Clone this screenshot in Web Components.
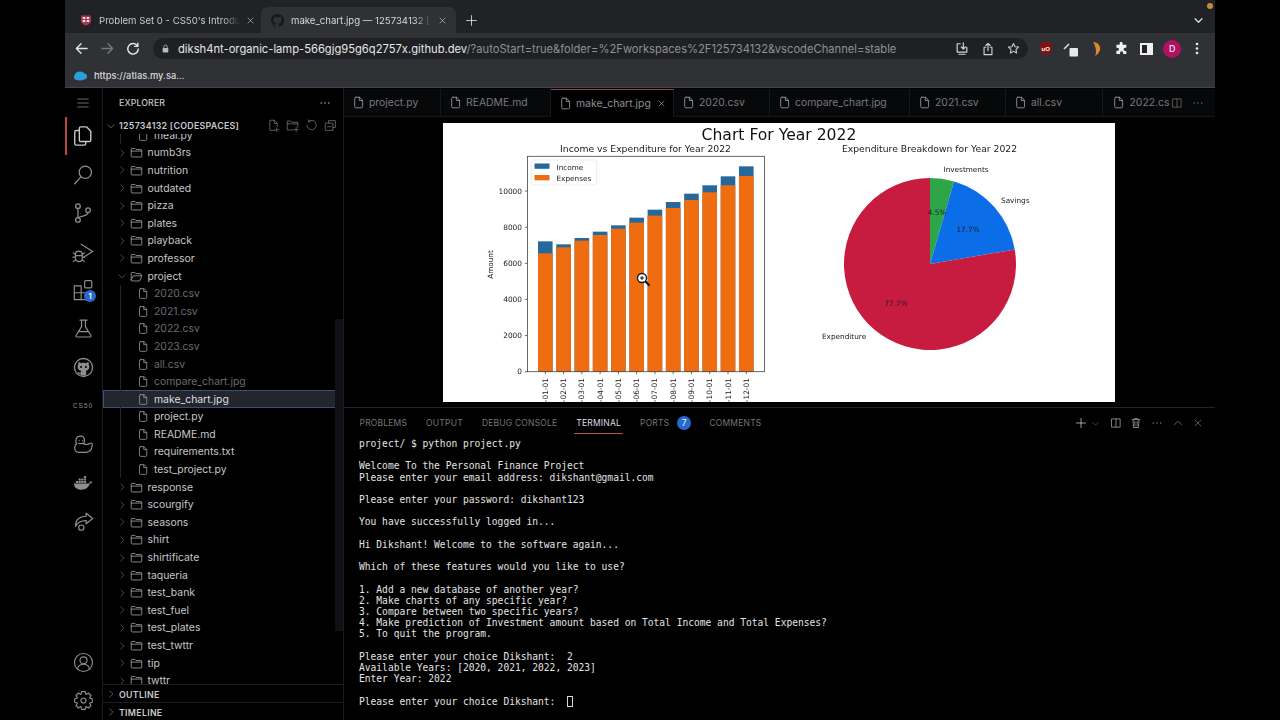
<!DOCTYPE html>
<html><head><meta charset="utf-8"><style>
html,body{margin:0;padding:0;background:#000;height:720px;overflow:hidden;font-family:Inter,"Liberation Sans",sans-serif}
</style></head><body>
<browser-window>
  <tab-strip></tab-strip>
  <nav-bar></nav-bar>
  <bookmark-bar></bookmark-bar>
  <code-workbench></code-workbench>
</browser-window>
<script>
const S=(vb,inner,w,h,extra='')=>`<svg xmlns="http://www.w3.org/2000/svg" width="${w}" height="${h||w}" viewBox="0 0 ${vb} ${vb}" fill="none" stroke="currentColor" stroke-linecap="round" stroke-linejoin="round" ${extra}>${inner}</svg>`;
const GH="M8 0C3.58 0 0 3.58 0 8c0 3.54 2.29 6.53 5.47 7.59.4.07.55-.17.55-.38 0-.19-.01-.82-.01-1.49-2.01.37-2.53-.49-2.69-.94-.09-.23-.48-.94-.82-1.13-.28-.15-.68-.52-.01-.53.63-.01 1.08.58 1.23.82.72 1.21 1.87.87 2.33.66.07-.52.28-.87.51-1.07-1.78-.2-3.64-.89-3.64-3.95 0-.87.31-1.59.82-2.15-.08-.2-.36-1.02.08-2.12 0 0 .67-.21 2.2.82.64-.18 1.32-.27 2-.27s1.36.09 2 .27c1.53-1.04 2.2-.82 2.2-.82.44 1.1.16 1.92.08 2.12.51.56.82 1.27.82 2.15 0 3.07-1.87 3.75-3.65 3.95.29.25.54.73.54 1.48 0 1.07-.01 1.93-.01 2.2 0 .21.15.46.55.38A8.013 8.013 0 0016 8c0-4.42-3.58-8-8-8z";
function gearPath(){let d='';const n=8,c=12,R=10.3,r=7.6;for(let i=0;i<n;i++){const a=i*2*Math.PI/n,s=.24,t=.14;const p=[[r,a-s-t],[R,a-s+.04],[R,a+s-.04],[r,a+s+t]];p.forEach((q,j)=>{d+=(i==0&&j==0?'M':'L')+(c+q[0]*Math.sin(q[1])).toFixed(2)+' '+(c-q[0]*Math.cos(q[1])).toFixed(2)})}return d+'Z'}
const I={
 file:s=>S(16,'<path d="M4.8 1.5h4.4L13 5.3v7.7a1.5 1.5 0 0 1-1.5 1.5H4.8A1.5 1.5 0 0 1 3.3 13V3a1.5 1.5 0 0 1 1.5-1.5zM9 1.6v3.9h3.9"/>',s),
 folder:s=>S(16,'<path d="M1.5 4A1 1 0 0 1 2.5 3h3.6l1.3 1.4h6.1a1 1 0 0 1 1 1v7.1a1 1 0 0 1-1 1h-11a1 1 0 0 1-1-1zM1.5 6.3h13"/>',s),
 open:s=>S(16,'<path d="M1.5 12.5V4A1 1 0 0 1 2.5 3h3.4l1.4 1.4h5.2a1 1 0 0 1 1 1v1.7M1.5 12.8c.2.4.5.7 1 .7h9.3l3-6.4H4.6z"/>',s),
 right:s=>S(16,'<path d="M6 3l5 5-5 5"/>',s),
 down:s=>S(16,'<path d="M3 6l5 5 5-5"/>',s),
 x:s=>S(16,'<path d="M3.5 3.5l9 9M12.5 3.5l-9 9"/>',s),
 plus:s=>S(16,'<path d="M8 2v12M2 8h12"/>',s),
 dots:s=>S(16,'<g fill="currentColor" stroke="none"><circle cx="3" cy="8" r="1"/><circle cx="8" cy="8" r="1"/><circle cx="13" cy="8" r="1"/></g>',s),
 split:s=>S(16,'<path d="M2.5 2.5h11v11h-11zM8 2.5v11"/>',s),
 trash:s=>S(16,'<path d="M6 3V2h4v1M3 3.5h10M4 3.5l.6 10.5h6.8l.6-10.5M6.5 6v6M9.500 6v6"/>',s),
 up:s=>S(16,'<path d="M3 10.500l5-5 5 5"/>',s),
 menu:s=>S(16,'<path d="M2 3.500h12M2 8h12M2 12.500h12"/>',s),
 newfile:s=>S(16,'<path d="M9.500 14H3.500V1.500h5.500L12.500 5v4M9 1.500V5.500h3.500M12 11v4.500M9.800 13.200h4.400"/>',s),
 newfolder:s=>S(16,'<path d="M9 13.500H1.500v-11h4.300l1.300 1.500h7.400v6M1.500 6h13M12.500 10.500v5M10 13h5"/>',s),
 refresh:s=>S(16,'<path d="M4 3.200a5.800 5.800 0 1 1-1.800 4.300M4.200 1v2.500H6.700"/>',s),
 collapse:s=>S(16,'<path d="M5.500 5V2h8.500v8.500H11M2 5h9v9H2zM4.500 9.500h4"/>',s),
 files:s=>S(24,'<path d="M9.500 2h6.300L20.500 6.700V16.500a1.500 1.500 0 0 1-1.500 1.500H9.500A1.500 1.500 0 0 1 8 16.500V3.500A1.500 1.500 0 0 1 9.500 2zM8 6H4.500A1.500 1.500 0 0 0 3 7.500V20.500A1.500 1.500 0 0 0 4.500 22H13.500A1.500 1.500 0 0 0 15 20.500V18"/>',s,s,'stroke-width="1.500"'),
 search:s=>S(24,'<circle cx="14.500" cy="9" r="6.700"/><path d="M9.800 14L2.800 21.500"/>',s,s,'stroke-width="1.400"'),
 scm:s=>S(24,'<circle cx="6.500" cy="4.500" r="2.500"/><circle cx="6.500" cy="19.500" r="2.500"/><circle cx="17.500" cy="9" r="2.500"/><path d="M6.500 7v10M17.500 11.500c0 4.500-8 3-11 5.800"/>',s,s,'stroke-width="1.400"'),
 run:s=>S(24,'<path d="M10 3.500L22.500 11.500 12 18M7.500 11a3.800 3.800 0 0 1 3.700 3.800v4a3.700 3.700 0 0 1-7.400 0v-4A3.800 3.800 0 0 1 7.500 11zM1.500 13l2.300 2M13.500 13l-2.300 2M1 17.500h2.800M14 17.500h-2.800M1.500 22.500l2.500-2M13.500 22.500l-2.500-2M3.800 16h7.400"/>',s,s,'stroke-width="1.300"'),
 ext:s=>S(24,'<path d="M2.500 7.500h7.500v7.500h7.500v7.500H2.500zM2.500 15h7.500v7.500"/><rect x="13.800" y="1.800" width="7.800" height="7.800" rx="1.200"/>',s,s,'stroke-width="1.300"'),
 flask:s=>S(24,'<path d="M8 2.500h8M9.800 2.500v7.300L3.500 20a1.100 1.100 0 0 0 1 1.700h15a1.100 1.100 0 0 0 1-1.700L14.200 9.800V2.500M6.800 15.500h10.400"/>',s,s,'stroke-width="1.400"'),
 github:s=>`<svg width="${s}" height="${s}" viewBox="0 0 24 24"><circle cx="12" cy="12" r="10.300" fill="none" stroke="currentColor" stroke-width="1.500"/><path fill="currentColor" d="M6.200 5.600c1.400.1 2.500.7 3.300 1.400 1.600-.4 3.400-.4 5 0 .8-.7 1.900-1.300 3.300-1.400.4 1.100.4 2.200.1 3.100.7.900 1 2 .8 3.200-.3 2.300-1.900 3.500-4.200 3.800.5.500.7 1.200.7 2v3.300h-6.400v-1.600c-2 .4-3.200-.5-3.800-2l1.400-.4c.5 1 1.300 1.300 2.400 1v-.3c0-.8.200-1.500.7-2-2.300-.3-3.900-1.500-4.200-3.800-.2-1.200.1-2.300.8-3.200-.3-.9-.3-2 .1-3.100z"/><g fill="#000"><ellipse cx="9.200" cy="11.300" rx="1" ry="1.400"/><ellipse cx="14.800" cy="11.300" rx="1" ry="1.400"/></g></svg>`,
 duck:s=>S(24,'<path d="M5 3.500c2.700-2.200 7-1.200 8 2.200.7 2.300-.2 4.200-1 5.300 2.500 1.400 4.200 1.300 6 .3 1.500-.8 3.300-1.500 3.800-.6.700 4-.5 9.500-7 10.300H7c-4 0-5.500-3-5-6 .3-1.700 1.200-3 2.300-3.800C2.800 9.500 2.800 5.300 5 3.500zM7 7.500h.01M11 7.500h.01M6.500 10.500c1.500.8 3 .8 4.500 0"/>',s,s,'stroke-width="1.400"'),
 docker:s=>`<svg width="${s}" height="${s}" viewBox="0 0 24 24" fill="currentColor"><path d="M1 12.500h18c.8-.2 1.300-1 1.200-2 .9-.6 2.200-.5 3 .2-.6 1.300-1.700 1.900-3 1.900C19 17 15.500 20 10.500 20 4.500 20 1.300 17 1 12.500z"/><path d="M3.500 9.500h2.600v2.400H3.500zM6.700 9.500h2.600v2.400H6.700zM9.900 9.500h2.600v2.400H9.900zM13.100 9.500h2.600v2.400h-2.600zM6.700 6.500h2.600v2.400H6.700zM9.900 6.500h2.600v2.400H9.900zM13.100 6.500h2.600v2.400h-2.600zM13.100 3.500h2.600v2.400h-2.600z"/></svg>`,
 share:s=>S(24,'<path d="M15 2.500L22.500 8.500 15 14.500V11C9 11 5 13 3 17.500 2.500 10.500 7 6 15 6zM9.500 22a3 3 0 1 0 0-6 3 3 0 0 0 0 6z"/>',s,s,'stroke-width="1.400"'),
 account:s=>S(24,'<circle cx="12" cy="12" r="10.300"/><circle cx="12" cy="9.500" r="4"/><path d="M5 19.500c1-3.500 3.500-5.500 7-5.500s6 2 7 5.500"/>',s,s,'stroke-width="1.300"'),
 gear:s=>S(24,`<path d="${gearPath()}"/><circle cx="12" cy="12" r="2.900"/>`,s,s,'stroke-width="1.300"'),
 back:s=>S(16,'<path d="M14 8H2.500M7.500 3L2.500 8l5 5"/>',s,s,'stroke-width="1.500"'),
 fwd:s=>S(16,'<path d="M2 8h11.500M8.500 3l5 5-5 5"/>',s,s,'stroke-width="1.500"'),
 reload:s=>S(16,'<path d="M13 4.500A6 6 0 1 0 14 8M13.500 1.500v3.500H10"/>',s,s,'stroke-width="1.700"'),
 lock:s=>`<svg width="${s}" height="${s}" viewBox="0 0 16 16"><rect x="3" y="7" width="10" height="8" rx="1.200" fill="currentColor"/><path d="M5 7V5a3 3 0 0 1 6 0v2" fill="none" stroke="currentColor" stroke-width="1.500"/></svg>`,
 install:s=>S(16,'<path d="M6 2H2.500v9.500h11V6M9.500 1v6.500M7 5.500l2.500 2.500L12 5.500M4.500 14h7"/>',s,s,'stroke-width="1.400"'),
 up2:s=>S(16,'<path d="M5.500 6H3.500v8.500h9V6h-2M8 10V1.500M5.500 4L8 1.500 10.500 4"/>',s,s,'stroke-width="1.300"'),
 star:s=>S(16,'<path d="M8 1.800l1.900 4 4.300.5-3.200 3 .9 4.300L8 11.500l-3.900 2.100.9-4.300-3.200-3 4.300-.5z"/>',s,s,'stroke-width="1.300"'),
 chev:s=>S(16,'<path d="M3 5.500l5 5 5-5"/>',s,s,'stroke-width="1.800"'),
};

class Base extends HTMLElement{
  connectedCallback(){ if(!this.shadowRoot){this.attachShadow({mode:'open'}).innerHTML=this.render();} }
}
const def=(n,c)=>customElements.define(n,c);

def('browser-window',class extends Base{render(){return `<style>:host{display:flex;flex-direction:column;width:1150px;height:720px;margin-left:65px;background:#000;position:relative;overflow:hidden}
 .rec{position:absolute;left:1142px;top:3px;width:6px;height:6px;border-radius:50%;background:#c98a45}</style><slot></slot><div class="rec"></div>`}});

def('chrome-tab',class extends Base{render(){const a=this.hasAttribute('active');return `<style>
 :host{display:flex;align-items:center;height:26px;width:${this.getAttribute('w')}px;box-sizing:border-box;padding-left:${a?9:14}px;border-radius:7px 7px 0 0;background:${a?'#2f3134':'transparent'};color:${a?'#d6d7d9':'#c9cacc'};font:400 9.6px Inter,"Liberation Sans",sans-serif;position:relative}
 .ic{width:14px;height:14px;flex:none;margin-right:${a?7:6}px;display:flex;align-items:center;justify-content:center}
 .t{flex:1;min-width:0;overflow:hidden;white-space:nowrap;-webkit-mask-image:linear-gradient(90deg,#000 88%,transparent);mask-image:linear-gradient(90deg,#000 88%,transparent)}
 .x{width:14px;height:14px;flex:none;margin:0 ${a?7:2}px 0 3px;color:#dcdcdc;display:flex;align-items:center;justify-content:center}</style>
 <span class="ic"><slot name="icon"></slot></span><span class="t"><slot></slot></span><span class="x">${I.x(9)}</span>`}});

def('tab-strip',class extends Base{render(){return `<style>
 :host{display:flex;align-items:flex-end;height:33px;background:#202225;box-sizing:border-box;padding-left:0;gap:2px;color:#ddd}
 .plus{width:30px;height:26px;display:flex;align-items:center;justify-content:center;color:#e8e8e8;margin-left:-2px}
 .sp{flex:1}.ch{width:16px;height:26px;margin-right:9px;display:flex;align-items:center;justify-content:center;color:#ddd}
 svg{display:block}</style>
 <chrome-tab w="194"><svg slot="icon" width="12" height="12" viewBox="0 0 12 12"><path d="M1 1.500h10v6c0 1.500-3 3.500-5 4-2-.5-5-2.500-5-4z" fill="#a5384f"/><path d="M2.800 3h2.500v2H2.800zM6.700 3h2.500v2H6.700zM2.800 6h2.500v2H2.800zM6.700 6h2.500v2H6.700z" fill="#f0dfe2"/></svg>Problem Set 0 - CS50's Introdu</chrome-tab>
 <chrome-tab active w="195"><svg slot="icon" width="13" height="13" viewBox="0 0 16 16"><path fill="#17181a" d="${GH}"/></svg>make_chart.jpg — 125734132 [</chrome-tab>
 <span class="plus">${I.plus(13)}</span><span class="sp"></span><span class="ch">${I.chev(11)}</span>`}});

def('nav-bar',class extends Base{render(){return `<style>
 :host{display:flex;align-items:center;height:33px;background:#2f3134;box-sizing:border-box;color:#e2e3e5;padding:0 0 1.500px 3px}
 .b{display:flex;align-items:center;justify-content:center;flex:none}
 .nav{width:26px}.dim{color:#75777b}
 .omni{display:flex;align-items:center;width:875px;height:21px;border-radius:11px;background:#1e2023;box-sizing:border-box;padding-left:7px;flex:none}
 .lock{color:#b8b9bb;margin-right:8px;width:10px}
 .u{font:400 11.2px Inter,"Liberation Sans",sans-serif;white-space:nowrap;color:#e6e7e8;flex:1;overflow:hidden}
 .u i{font-style:normal;color:#8e9094}
 .o{width:25.500px;color:#d0d1d3}
 .ex{width:25.300px}
 .ub{width:12px;height:13px;background:#7e1414;border-radius:3px 3px 6px 6px;color:#fff;font:700 6px "Liberation Sans",sans-serif;display:flex;align-items:center;justify-content:center}
 .av{width:18px;height:18px;border-radius:50%;background:#b0125f;color:#eee;font:500 9px Inter,sans-serif;display:flex;align-items:center;justify-content:center}
 svg{display:block}
 </style>
 <span class="b nav">${I.back(15)}</span><span class="b nav dim">${I.fwd(15)}</span><span class="b nav">${I.reload(14)}</span>
 <div class="omni" style="margin-left:7px"><span class="b lock">${I.lock(9)}</span><span class="u">diksh4nt-organic-lamp-566gjg95g6q2757x.github.dev<i>/?autoStart=true&amp;folder=%2Fworkspaces%2F125734132&amp;vscodeChannel=stable</i></span>
 <span class="b o">${I.install(14)}</span><span class="b o">${I.up2(14)}</span><span class="b o" style="margin-right:2px">${I.star(13)}</span></div>
 <span class="b ex" style="margin-left:5px"><span class="ub">uO</span></span>
 <span class="b ex"><svg width="20" height="20" viewBox="0 0 20 20"><path d="M3 10l5-5" stroke="#ddd" stroke-width="1.600"/><rect x="8.500" y="9" width="8.500" height="8.500" rx="1" fill="#e8e8e8"/></svg></span>
 <span class="b ex"><svg width="12" height="16" viewBox="0 0 12 16"><path d="M3 1c5 0 8 4 7 8-1 3-3 5-5 6 2-4 1-9-2-14z" fill="#d98a2b"/><path d="M3 1C1 5 2 11 5 15 1 13-1 5 3 1z" fill="#27305c"/></svg></span>
 <span class="b ex"><svg width="13" height="13" viewBox="0 0 14 14"><path d="M5 1.500a1.600 1.600 0 0 1 3.200 0V3h4v3.200h-1.300a1.700 1.700 0 0 0 0 3.400h1.300V13H8.800v-1.300a1.700 1.700 0 0 0-3.400 0V13H1.500V9.500h1.100a1.700 1.700 0 0 0 0-3.400H1.500V3H5z" fill="#f0f0f0"/></svg></span>
 <span class="b ex"><svg width="13" height="12" viewBox="0 0 13 12"><rect x=".7" y=".7" width="11.600" height="10.600" fill="#f0f0f0" stroke="#f0f0f0" stroke-width="1.400"/><rect x="2" y="2" width="5" height="8" fill="#1f2123"/></svg></span>
 <span class="b ex"><span class="av">D</span></span>
 <span class="b ex"><svg width="4" height="13" viewBox="0 0 4 13"><g fill="#e8e8e8"><circle cx="2" cy="2" r="1.300"/><circle cx="2" cy="6.500" r="1.300"/><circle cx="2" cy="11" r="1.300"/></g></svg></span>`}});

def('bookmark-bar',class extends Base{render(){return `<style>
 :host{display:flex;align-items:center;height:22px;background:#2f3134;box-sizing:border-box;padding:0 0 2px 9px;color:#d6d7d9;font:500 9.300px Inter,"Liberation Sans",sans-serif;border-bottom:1px solid #43454a}
 svg{margin-right:7px;display:block}</style>
 <svg width="13" height="10" viewBox="0 0 13 10"><g fill="#2a9fd8"><ellipse cx="6" cy="5" rx="5.500" ry="4.500"/><ellipse cx="9.500" cy="5.500" rx="3.500" ry="3"/><ellipse cx="3" cy="6" rx="3" ry="3"/></g></svg>https://atlas.my.sa...`}});

def('activity-item',class extends Base{render(){return `<style>:host{display:flex;align-items:center;justify-content:center;height:38.500px;width:36px;color:${this.getAttribute('c')||'#8d8e90'};position:relative}
 ::slotted(svg){display:block}
 .bar{position:absolute;left:0;top:0;width:1.500px;height:38px;background:#b84a3f}
 .badge{position:absolute;left:19px;top:19px;width:12px;height:12px;border-radius:50%;background:#2468d0;color:#fff;font:600 7.500px Inter,sans-serif;display:flex;align-items:center;justify-content:center}
 </style>${this.hasAttribute('active')?'<span class="bar"></span>':''}<slot></slot>${this.getAttribute('badge')?`<span class="badge">${this.getAttribute('badge')}</span>`:''}`}});

def('activity-bar',class extends Base{render(){const it=(n,s,a='')=>`<activity-item ${a}>${I[n](s)}</activity-item>`;return `<style>
 :host{display:flex;flex-direction:column;width:37px;border-right:1px solid #1c1d20;box-sizing:content-box;background:#000;flex:none}
 .top{height:29px;display:flex;align-items:center;justify-content:center;width:36px;color:#77787b}
 .sp{flex:1}.cs{font:500 6.500px "Liberation Sans",sans-serif;letter-spacing:1px;color:#8d8e90}
 </style>
 <div class="top">${I.menu(14)}</div>
 ${it('files',22,'active c="#c8c9cb"')}${it('search',22)}${it('scm',22)}${it('run',22)}${it('ext',22,'badge="1"')}${it('flask',21)}${it('github',21)}
 <activity-item><span class="cs">CS50</span></activity-item>
 ${it('duck',21)}${it('docker',20)}${it('share',21)}
 <div class="sp"></div>${it('account',21)}${it('gear',21)}`}});

def('tree-row',class extends Base{render(){
 const k=this.getAttribute('k')||'folder';const isF=k==='file';const sel=this.hasAttribute('sel');
 return `<style>:host{display:flex;align-items:center;height:17.600px;box-sizing:border-box;font:400 10.400px Inter,"Liberation Sans",sans-serif;white-space:nowrap;color:${this.hasAttribute('dim')?'#6b6c6f':'#c6c7c9'};position:relative;${sel?'background:#24262d;outline:1px solid #3d4f72;outline-offset:-1px;color:#dedfe0;':''}}
 .g{width:11px;display:flex;justify-content:center;color:#6f7073;flex:none;margin-left:13px}
 .i{display:flex;justify-content:center;color:#a2a3a6;width:13px;flex:none;margin-right:5px;margin-left:2.500px}
 .f{display:flex;justify-content:center;color:#a2a3a6;width:12px;flex:none;margin-left:34px;margin-right:5px}
 .rule{position:absolute;left:16.500px;top:0;bottom:0;width:1px;background:#232427}
 svg{display:block}</style>
 ${isF?`<span class="rule"></span><span class="f">${I.file(13)}</span>`:`<span class="g">${k==='open'?I.down(10):I.right(10)}</span><span class="i">${k==='open'?I.open(13):I.folder(13)}</span>`}<slot></slot>`}});

def('explorer-view',class extends Base{render(){
 const folders1=['numb3rs','nutrition','outdated','pizza','plates','playback','professor'];
 const dim=['2020.csv','2021.csv','2022.csv','2023.csv','all.csv','compare_chart.jpg'];
 const after=['project.py','README.md','requirements.txt','test_project.py'];
 const folders2=['response','scourgify','seasons','shirt','shirtificate','taqueria','test_bank','test_fuel','test_plates','test_twttr','tip','twttr'];
 const ic=n=>`<span class="hi">${I[n](13)}</span>`;
 return `<style>
 :host{display:flex;flex-direction:column;width:239.500px;height:100%;flex:none;background:#000;border-right:1px solid #1c1d20;position:relative;box-sizing:content-box}
 .h{height:29px;display:flex;align-items:center;justify-content:space-between;padding:0 12px 0 16px;font:500 8.800px Inter,"Liberation Sans",sans-serif;color:#c4c5c7;letter-spacing:.1px;flex:none}
 .sec{height:17px;display:flex;align-items:center;font:600 8.800px Inter,"Liberation Sans",sans-serif;color:#c9cacc;flex:none;letter-spacing:.3px;padding:0 3px 0 1px;box-sizing:border-box}
 .sec .c{width:14px;display:flex;justify-content:center;color:#8a8b8d;margin-right:1px}
 .sec .t{flex:1}
 .hi{width:19px;display:flex;justify-content:center;color:#6d6e72}
 .tree{flex:1;overflow:hidden;min-height:0;position:relative}
 .in{margin-top:-7.500px}
 .bar{border-top:1px solid #1c1d20;height:18px;padding-top:1px}
 .scroll{position:absolute;right:0;top:185px;width:8px;height:312px;background:#101114}
 svg{display:block}
 </style>
 <div class="h"><span>EXPLORER</span><span style="color:#b0b1b3">${I.dots(12)}</span></div>
 <div class="sec"><span class="c">${I.down(10)}</span><span class="t">125734132 [CODESPACES]</span>${ic('newfile')}${ic('newfolder')}${ic('refresh')}${ic('collapse')}</div>
 <div class="tree"><div class="in">
 <tree-row k="file">meal.py</tree-row>
 ${folders1.map(f=>`<tree-row>${f}</tree-row>`).join('')}
 <tree-row k="open">project</tree-row>
 ${dim.map(f=>`<tree-row k="file" dim>${f}</tree-row>`).join('')}
 <tree-row k="file" sel>make_chart.jpg</tree-row>
 ${after.map(f=>`<tree-row k="file">${f}</tree-row>`).join('')}
 ${folders2.map(f=>`<tree-row>${f}</tree-row>`).join('')}
 </div><div class="scroll"></div></div>
 <div class="sec bar"><span class="c">${I.right(10)}</span><span class="t">OUTLINE</span></div>
 <div class="sec bar"><span class="c">${I.right(10)}</span><span class="t">TIMELINE</span></div>`}});

def('editor-tab',class extends Base{render(){const a=this.hasAttribute('active');return `<style>
 :host{display:flex;align-items:center;flex:none;height:28px;box-sizing:border-box;width:${this.getAttribute('w')}px;padding-left:8px;border-right:1px solid #17181b;background:${a?'#000':'#07080a'};color:${a?'#8f9093':'#77787b'};font:400 10.400px Inter,"Liberation Sans",sans-serif;white-space:nowrap;overflow:hidden;${a?'border-top:1.500px solid #8c4a4a;':'border-bottom:1px solid #17181b;'}}
 .i{margin-right:4.500px;color:#a0a1a4;flex:none}.x{margin-left:auto;margin-right:7px;color:#b8b9bb}
 svg{display:block}</style><span class="i">${I.file(13)}</span><slot></slot>${a?`<span class="x">${I.x(9)}</span>`:''}`}});

def('editor-tabs',class extends Base{render(){return `<style>:host{display:flex;height:29px;flex:none;background:#07080a;border-top:1px solid #000;box-sizing:border-box;overflow:hidden}
 .rest{flex:1;min-width:0;display:flex;align-items:center;border-bottom:1px solid #17181b;color:#77787b;font:400 10.400px Inter,"Liberation Sans",sans-serif;padding-left:9px;white-space:nowrap;overflow:hidden;box-sizing:border-box}
 .i{margin-right:5px;color:#a0a1a4;flex:none}svg{display:block}
 .a{display:flex;align-items:center;gap:9px;margin-left:auto;padding:0 9px 0 0;color:#6d6e72;background:#07080a;flex:none}</style>
 <editor-tab w="97">project.py</editor-tab><editor-tab w="110">README.md</editor-tab><editor-tab active w="123">make_chart.jpg</editor-tab><editor-tab w="96">2020.csv</editor-tab><editor-tab w="140">compare_chart.jpg</editor-tab><editor-tab w="96">2021.csv</editor-tab><editor-tab w="97">all.csv</editor-tab>
 <div class="rest"><span class="i">${I.file(13)}</span><span style="flex:none">2022.cs</span><span class="a" style="margin-left:2px">${I.split(12)}${I.dots(12)}</span></div>`}});

def('chart-image',class extends Base{render(){
 const inc=[364,373,354,335,316,293,269,246,221,196,169,139],exp=[400,382,362,345,326,308,287,264,240,217,196,168];
 const zy=v=>120+v/3;const base=371.7;
 let bars='',ticksX='';
 inc.forEach((v,i)=>{const x=538+i*18.27;
  bars+=`<rect x="${x}" y="${zy(v)}" width="14.600" height="${base-zy(v)}" fill="#26689a"/><rect x="${x}" y="${zy(exp[i])}" width="14.600" height="${base-zy(exp[i])}" fill="#ef6c10"/>`;
  ticksX+=`<path d="M${x+7.300} 371.700v2.500" stroke="#333" stroke-width=".7"/><text x="0" y="0" transform="translate(${x+9.800} 378) rotate(-90)" text-anchor="end" font-size="7.400" fill="#1a1a1a">-${String(i+1).padStart(2,'0')}-01</text>`});
 let ticksY='';[0,2000,4000,6000,8000,10000].forEach(v=>{const y=371.7-v*0.018067;ticksY+=`<path d="M524.800 ${y}h2.500" stroke="#333" stroke-width=".7"/><text x="522" y="${y+2.600}" text-anchor="end" font-size="7.400" fill="#1a1a1a">${v}</text>`});
 const cx=930,cy=264,r=86;const pt=d=>{const a=d*Math.PI/180;return `${(cx+r*Math.sin(a)).toFixed(2)} ${(cy-r*Math.cos(a)).toFixed(2)}`};
 return `<style>:host{display:block;width:672px;height:279px;background:#fff;flex:none;overflow:hidden;position:relative}
 svg{display:block;font-family:"DejaVu Sans",sans-serif}
 .g{filter:blur(.2px)}</style>
 <svg width="672" height="279" viewBox="443 123 672 279"><g class="g">
 <text x="779" y="140" text-anchor="middle" font-size="15.600" fill="#111">Chart For Year 2022</text>
 <text x="645.500" y="151.500" text-anchor="middle" font-size="9.260" fill="#1a1a1a">Income vs Expenditure for Year 2022</text>
 <text x="929.500" y="151.500" text-anchor="middle" font-size="9.260" fill="#1a1a1a">Expenditure Breakdown for Year 2022</text>
 ${bars}
 <rect x="527.500" y="156.300" width="237" height="215.400" fill="none" stroke="#444" stroke-width=".8"/>
 <rect x="531.500" y="160" width="65" height="25" rx="1.500" fill="#fff" fill-opacity=".85" stroke="#e2e2e2" stroke-width=".6"/>
 <rect x="534.500" y="163.500" width="15" height="5.300" fill="#26689a"/><rect x="534.500" y="175" width="15" height="5.300" fill="#ef6c10"/>
 <text x="556.500" y="169.500" font-size="7.300" fill="#1a1a1a">Income</text><text x="556.500" y="180.500" font-size="7.300" fill="#1a1a1a">Expenses</text>
 ${ticksX}${ticksY}
 <text transform="translate(492.500 264.500) rotate(-90)" text-anchor="middle" font-size="7.300" fill="#1a1a1a">Amount</text>
 <path d="M${cx} ${cy}L${pt(0)}A${r} ${r} 0 0 1 ${pt(16.200)}Z" fill="#2ea648"/>
 <path d="M${cx} ${cy}L${pt(16.200)}A${r} ${r} 0 0 1 ${pt(80.300)}Z" fill="#0b6ee8"/>
 <path d="M${cx} ${cy}L${pt(80.300)}A${r} ${r} 0 1 1 ${pt(360)}Z" fill="#c81b40"/>
 <text x="943.500" y="172" font-size="7.300" fill="#1a1a1a">Investments</text>
 <text x="1001" y="203" font-size="7.300" fill="#1a1a1a">Savings</text>
 <text x="822" y="339" font-size="7.300" fill="#1a1a1a">Expenditure</text>
 <g font-size="7.300" text-anchor="middle" fill="#1a1a2a"><text x="937" y="215">4.5%</text><text x="968" y="232">17.7%</text><text x="896" y="306">77.7%</text></g>
 </g>
 <g transform="translate(642 278)"><path d="M2.500 2.500L7 7" stroke="#111" stroke-width="2.200" stroke-linecap="round"/><circle r="4.500" fill="#fff" stroke="#111" stroke-width="1.300"/><path d="M-2 0h4M0-2v4" stroke="#111" stroke-width="1"/></g>
 </svg>`}});

def('editor-pane',class extends Base{render(){return `<style>:host{display:flex;align-items:center;justify-content:center;height:291px;flex:none;background:#000;border-bottom:1px solid #232427;box-sizing:border-box}</style><chart-image></chart-image>`}});

def('panel-tab',class extends Base{render(){const a=this.hasAttribute('active');return `<style>:host{display:flex;align-items:center;height:100%;position:relative;font:400 8.500px Inter,"Liberation Sans",sans-serif;letter-spacing:.2px;color:${a?'#dcdde0':'#74767a'};white-space:nowrap}
 .u{position:absolute;left:-2px;right:-2px;bottom:4px;height:1px;background:#b4584c}
 .b{width:14px;height:14px;border-radius:50%;background:#2468d0;color:#e8eefc;font:500 8.500px Inter,sans-serif;display:flex;align-items:center;justify-content:center;margin-left:8px}</style>
 <slot></slot>${this.getAttribute('badge')?`<span class="b">${this.getAttribute('badge')}</span>`:''}${a?'<span class="u"></span>':''}`}});

def('panel-head',class extends Base{render(){return `<style>:host{display:flex;align-items:center;height:30px;flex:none;padding:0 5px 0 16px;box-sizing:border-box;gap:19px}
 .r{margin-left:auto;display:flex;align-items:center;color:#a8a9ab}.r span{display:flex;justify-content:center}
 svg{display:block}</style>
 <panel-tab>PROBLEMS</panel-tab><panel-tab>OUTPUT</panel-tab><panel-tab>DEBUG CONSOLE</panel-tab><panel-tab active>TERMINAL</panel-tab><panel-tab badge="7">PORTS</panel-tab><panel-tab style="margin-left:-1px">COMMENTS</panel-tab>
 <div class="r"><span style="width:14px;color:#d0d1d3">${I.plus(12)}</span><span style="width:14px;color:#77787b">${I.down(9)}</span><span style="width:24px;margin-left:2px">${I.split(12)}</span><span style="width:16px;">${I.trash(12)}</span><span style="width:26px;color:#77787b">${I.dots(12)}</span><span style="width:16px;color:#77787b">${I.up(12)}</span><span style="width:24px;color:#8a8b8d">${I.x(10)}</span></div>`}});

def('term-view',class extends Base{render(){return `<style>:host{display:block;flex:1;padding:0 0 0 15.500px;font:400 9.600px/11.200px "DejaVu Sans Mono",monospace;color:#e4e4e4;white-space:pre;background:#000;overflow:hidden}
 .c{display:inline-block;width:6px;height:10.500px;border:1px solid #d8d8d8;box-sizing:border-box;vertical-align:-2px}</style><slot></slot><span class="c"></span>`}});

def('code-workbench',class extends Base{render(){return `<style>:host{display:flex;flex:1;min-height:0;background:#000}
 .main{flex:1;min-width:0;display:flex;flex-direction:column}
 .panel{flex:1;min-height:0;display:flex;flex-direction:column}</style>
 <activity-bar></activity-bar><explorer-view></explorer-view>
 <div class="main"><editor-tabs></editor-tabs><editor-pane></editor-pane>
 <div class="panel"><panel-head></panel-head><term-view>project/ $ python project.py

Welcome To the Personal Finance Project
Please enter your email address: dikshant@gmail.com

Please enter your password: dikshant123

You have successfully logged in...

Hi Dikshant! Welcome to the software again...

Which of these features would you like to use?

1. Add a new database of another year?
2. Make charts of any specific year?
3. Compare between two specific years?
4. Make prediction of Investment amount based on Total Income and Total Expenses?
5. To quit the program.

Please enter your choice Dikshant:  2
Available Years: [2020, 2021, 2022, 2023]
Enter Year: 2022

Please enter your choice Dikshant:  </term-view></div></div>`}});
</script>
</body></html>
